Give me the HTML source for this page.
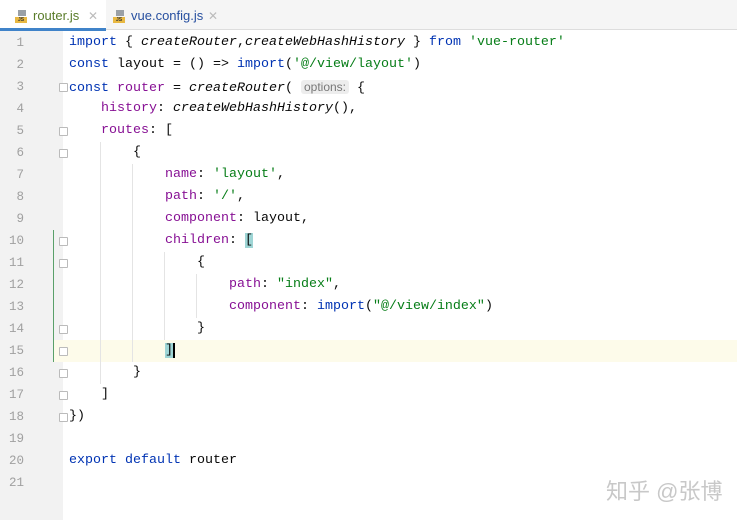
<!DOCTYPE html>
<html><head><meta charset="utf-8"><style>
*{margin:0;padding:0;box-sizing:border-box}
body{width:737px;height:520px;overflow:hidden;background:#fff;position:relative;font-family:"Liberation Mono",monospace;font-size:13.33px}
.tabs{position:absolute;left:0;top:0;width:737px;height:30px;background:#f5f5f5;border-bottom:1px solid #ddd}
.tab{position:absolute;top:0;height:30px;font-family:"Liberation Sans",sans-serif;font-size:13px;line-height:32px}
.ico{position:absolute;top:10px;width:12px;height:13px}
.ico:before{content:"";position:absolute;left:3px;top:0;width:8px;height:6px;background:#9aa0a6}
.ico b{position:absolute;left:0;top:7px;width:12px;height:6px;background:#e8b842;font-size:5px;line-height:6px;color:#333;text-align:center;font-family:"Liberation Sans";font-weight:bold}
.x{color:#bbb;font-size:12px}
.gut{position:absolute;left:0;top:31px;width:63px;height:489px;background:#f2f2f2}
.ln{position:absolute;left:0;width:24px;text-align:right;color:#a0a0a0;font-size:12.5px;height:22px;line-height:22px}
.code{position:absolute;left:69px;height:22px;line-height:22px;white-space:pre;color:#080808}
.k{color:#0033b3}.p{color:#871094}.s{color:#067d17}.i{font-style:italic}
.guide{position:absolute;width:1px;background:#e4e4e4}
.hint{background:#ededed;color:#777;font-family:"Liberation Sans",sans-serif;font-size:12px;border-radius:3px;padding:0 3px}
.fold{position:absolute;left:59px;width:9px;height:9px;border:1px solid #bbb;background:#fff;border-radius:1px}
.L{position:absolute;left:0;top:2px;width:737px;height:520px}
</style></head><body>
<div class="tabs">
<div class="tab" style="left:0;width:106px;background:#fff;border-bottom:3px solid #4083c9;height:31px"><span class="ico" style="left:15px"><b>JS</b></span><span style="position:absolute;left:33px;color:#5a7c2a">router.js</span><span class="x" style="position:absolute;left:88px">✕</span></div>
<div class="tab" style="left:106px;width:120px"><span class="ico" style="left:7px"><b>JS</b></span><span style="position:absolute;left:25px;color:#2850a0">vue.config.js</span><span class="x" style="position:absolute;left:102px">✕</span></div>
</div>
<div class="gut"></div>
<div class="L">
<div style="position:absolute;left:53px;top:338px;width:684px;height:22px;background:#fdfbea"></div>
<div style="position:absolute;left:53px;top:228px;width:1px;height:132px;background:#5aa06a"></div>
<div class="guide" style="left:100px;top:140px;height:242px"></div>
<div class="guide" style="left:132px;top:162px;height:198px"></div>
<div class="guide" style="left:164px;top:250px;height:88px"></div>
<div class="guide" style="left:196px;top:272px;height:44px"></div>
<div class="fold" style="top:81px"></div><div class="fold" style="top:125px"></div><div class="fold" style="top:147px"></div>
<div class="fold" style="top:235px"></div><div class="fold" style="top:257px"></div><div class="fold" style="top:323px"></div>
<div class="fold" style="top:345px"></div><div class="fold" style="top:367px"></div><div class="fold" style="top:389px"></div>
<div class="fold" style="top:411px"></div>
<div class="ln" style="top:30px">1</div><div class="ln" style="top:52px">2</div><div class="ln" style="top:74px">3</div><div class="ln" style="top:96px">4</div><div class="ln" style="top:118px">5</div><div class="ln" style="top:140px">6</div><div class="ln" style="top:162px">7</div><div class="ln" style="top:184px">8</div><div class="ln" style="top:206px">9</div><div class="ln" style="top:228px">10</div><div class="ln" style="top:250px">11</div><div class="ln" style="top:272px">12</div><div class="ln" style="top:294px">13</div><div class="ln" style="top:316px">14</div><div class="ln" style="top:338px">15</div><div class="ln" style="top:360px">16</div><div class="ln" style="top:382px">17</div><div class="ln" style="top:404px">18</div><div class="ln" style="top:426px">19</div><div class="ln" style="top:448px">20</div><div class="ln" style="top:470px">21</div>
<div class="code" style="top:30px"><span class="k">import</span> { <span class="i">createRouter</span>,<span class="i">createWebHashHistory</span> } <span class="k">from</span> <span class="s">'vue-router'</span></div>
<div class="code" style="top:52px"><span class="k">const</span> layout = () =&gt; <span class="k">import</span>(<span class="s">'@/view/layout'</span>)</div>
<div class="code" style="top:74px"><span class="k">const</span> <span class="p">router</span> = <span class="i">createRouter</span>( <span class="hint">options:</span> {</div>
<div class="code" style="top:96px">    <span class="p">history</span>: <span class="i">createWebHashHistory</span>(),</div>
<div class="code" style="top:118px">    <span class="p">routes</span>: [</div>
<div class="code" style="top:140px">        {</div>
<div class="code" style="top:162px">            <span class="p">name</span>: <span class="s">'layout'</span>,</div>
<div class="code" style="top:184px">            <span class="p">path</span>: <span class="s">'/'</span>,</div>
<div class="code" style="top:206px">            <span class="p">component</span>: layout,</div>
<div class="code" style="top:228px">            <span class="p">children</span>: <span style="background:#9ed5d5">[</span></div>
<div class="code" style="top:250px">                {</div>
<div class="code" style="top:272px">                    <span class="p">path</span>: <span class="s">"index"</span>,</div>
<div class="code" style="top:294px">                    <span class="p">component</span>: <span class="k">import</span>(<span class="s">"@/view/index"</span>)</div>
<div class="code" style="top:316px">                }</div>
<div class="code" style="top:338px">            <span style="background:#9ed5d5;border-right:2px solid #000">]</span></div>
<div class="code" style="top:360px">        }</div>
<div class="code" style="top:382px">    ]</div>
<div class="code" style="top:404px">})</div>
<div class="code" style="top:448px"><span class="k">export default</span> router</div>
</div>
<div style="position:absolute;left:606px;top:474px;font-family:'Liberation Sans','Noto Sans CJK SC',sans-serif;font-size:22px;color:#c8c8c8;white-space:nowrap">知乎 @张博</div>
</body></html>
